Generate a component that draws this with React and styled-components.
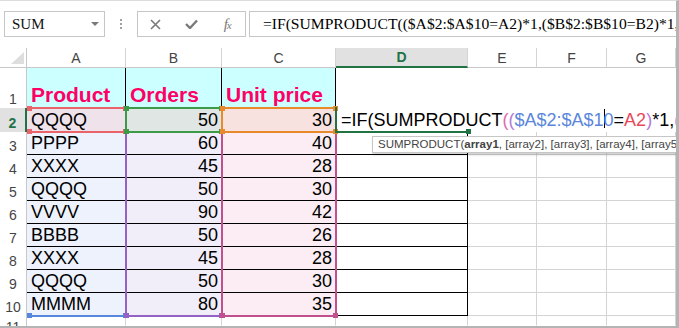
import styled, { createGlobalStyle, css } from "styled-components";

const GlobalStyle = createGlobalStyle`
  html, body {
    margin: 0;
    padding: 0;
    background: #fff;
  }
  body {
    font-family: "Liberation Sans", Arial, sans-serif;
  }
`;

const GREEN = "#217346";
const GRID = "#d4d4d4";
const HEAD_LINE = "#c8c8c8";

const Frame = styled.div`
  width: 679px;
  height: 328px;
  box-sizing: border-box;
  border-top: 1px solid #dcdcdc;
  border-right: 3px solid #b4b4b4;
  border-bottom: 2px solid #b4b4b4;
  overflow: hidden;
  background: #fff;
`;

const FormulaBar = styled.div`
  display: flex;
  align-items: flex-start;
  height: 47px;
  box-sizing: border-box;
  padding: 10px 0 0 4px;
`;

const NameBox = styled.div`
  width: 101px;
  height: 26px;
  box-sizing: border-box;
  border: 1px solid #c6c6c6;
  display: flex;
  align-items: center;
  justify-content: space-between;
  padding: 0 5px 0 7px;
  font-family: "Liberation Serif", "Times New Roman", serif;
  font-size: 15px;
  color: #111;
`;

const DropArrow = styled.span`
  width: 0;
  height: 0;
  border-left: 4px solid transparent;
  border-right: 4px solid transparent;
  border-top: 4px solid #7a7a7a;
`;

const Grip = styled.div`
  display: flex;
  flex-direction: column;
  gap: 2px;
  margin: 8px 15px 0 15px;
`;

const GripDot = styled.span`
  width: 2px;
  height: 2px;
  background: #a0a0a0;
`;

const FxBox = styled.div`
  width: 109px;
  height: 26px;
  box-sizing: border-box;
  border: 1px solid #c6c6c6;
  display: grid;
  grid-template-columns: repeat(3, 1fr);
  align-items: center;
  justify-items: center;
  color: #7a7a7a;
`;

const FxLabel = styled.span`
  font-family: "Liberation Serif", "Times New Roman", serif;
  font-style: italic;
  font-size: 15px;
  color: #7a7a7a;
  letter-spacing: -1px;
  & small {
    font-size: 11px;
  }
`;

const FormulaInput = styled.div`
  flex: 1;
  margin-left: 3px;
  height: 26px;
  box-sizing: border-box;
  border: 1px solid #c6c6c6;
  border-right: none;
  padding-left: 13px;
  font-family: "Liberation Serif", "Times New Roman", serif;
  font-size: 15.6px;
  line-height: 24px;
  white-space: nowrap;
  overflow: hidden;
  color: #000;
`;

const gridTemplate = css`
  display: grid;
  grid-template-columns: 27px 99px 96px 114px 132px 69px 70px 69px;
  grid-template-rows: 20px 40px 24px repeat(8, 23px) 10px;
`;

const Sheet = styled.div`
  position: relative;
`;

const Grid = styled.div`
  ${gridTemplate}
`;

const Overlay = styled.div`
  ${gridTemplate}
  position: absolute;
  inset: 0;
  pointer-events: none;
  z-index: 3;
`;

const Corner = styled.div`
  box-sizing: border-box;
  border-right: 1px solid ${HEAD_LINE};
  border-bottom: 1px solid ${HEAD_LINE};
  display: flex;
  justify-content: flex-end;
  align-items: flex-end;
  padding: 0 2px 3px 0;
`;

const ColHead = styled.div`
  box-sizing: border-box;
  border-right: 1px solid ${GRID};
  border-bottom: ${(p) => (p.$active ? `2px solid ${GREEN}` : `1px solid ${HEAD_LINE}`)};
  background: ${(p) => (p.$active ? "#e1e1e1" : "#fff")};
  color: ${(p) => (p.$active ? GREEN : "#444")};
  font-weight: ${(p) => (p.$active ? "bold" : "normal")};
  font-size: 14px;
  display: flex;
  align-items: center;
  justify-content: center;
`;

const RowHead = styled.div`
  box-sizing: border-box;
  overflow: hidden;
  border-right: ${(p) => (p.$active ? `2px solid ${GREEN}` : `1px solid ${HEAD_LINE}`)};
  background: ${(p) => (p.$active ? "#e1e1e1" : "#fff")};
  color: ${(p) => (p.$active ? GREEN : "#444")};
  font-weight: ${(p) => (p.$active ? "bold" : "normal")};
  font-size: 14px;
  display: flex;
  align-items: ${(p) => (p.$cut ? "flex-start" : "flex-end")};
  justify-content: center;
  padding: ${(p) => (p.$cut ? "3px 0 0" : "0 0 1px")};
`;

const Cell = styled.div`
  box-sizing: border-box;
  min-width: 0;
  display: flex;
  align-items: flex-end;
  justify-content: ${(p) => (p.$num ? "flex-end" : "flex-start")};
  padding: 0 3px 0 4px;
  border-right: 1px solid ${(p) => p.$right || "transparent"};
  border-bottom: 1px solid ${(p) => p.$bottom || "transparent"};
  background: ${(p) => p.$fill || "#fff"};
  font-size: 18px;
  color: #000;
  white-space: nowrap;
`;

const TitleCell = styled(Cell)`
  font-size: 21px;
  font-weight: bold;
  color: #ff0066;
`;

const EditCell = styled(Cell)`
  position: relative;
  z-index: 2;
  padding-left: 5px;
  overflow: visible;
`;

const EditText = styled.div`
  align-self: stretch;
  display: flex;
  align-items: flex-end;
  background: #fff;
  padding-right: 40px;
  font-size: 18px;
`;

const Tok = styled.span`
  color: ${(p) => p.$c};
`;

const Caret = styled.span`
  display: inline-block;
  width: 1px;
  height: 19px;
  margin: 0 -1px 3px 0;
  background: #000;
  align-self: flex-end;
`;

const RangeBox = styled.div`
  grid-area: ${(p) => p.$area};
  margin: ${(p) => (p.$noLeft ? "-1px -1px -1px 0" : "-1px")};
  border: 2px solid ${(p) => p.$color};
  ${(p) => p.$noLeft && "border-left: none;"}
  position: relative;
`;

const Handle = styled.span`
  position: absolute;
  width: 5px;
  height: 5px;
  background: ${(p) => p.$color};
  ${(p) => (p.$v === "top" ? "top: -3px;" : "bottom: -3px;")}
  ${(p) => (p.$h === "left" ? `left: ${p.$edge ? "0" : "-3px"};` : "right: -3px;")}
`;

const ActiveBox = styled.div`
  grid-area: 3 / 5 / 4 / 6;
  margin: -1px;
  border-left: 2px solid ${GREEN};
  border-bottom: 2px solid ${GREEN};
  position: relative;
`;

const FillHandle = styled.span`
  position: absolute;
  right: -2px;
  bottom: -3px;
  width: 5px;
  height: 5px;
  background: ${GREEN};
`;

const Tooltip = styled.div`
  position: absolute;
  top: calc(100% + 5px);
  left: 35px;
  height: 17px;
  box-sizing: border-box;
  padding: 0 5px;
  background: #fff;
  border: 1px solid #c6c6c6;
  box-shadow: 1px 2px 2px rgba(0, 0, 0, 0.18);
  font-size: 11.5px;
  line-height: 15px;
  color: #444;
  white-space: nowrap;
`;

const COLS = ["A", "B", "C", "D", "E", "F", "G"];

const DATA = [
  ["QQQQ", 50, 30],
  ["PPPP", 60, 40],
  ["XXXX", 45, 28],
  ["QQQQ", 50, 30],
  ["VVVV", 90, 42],
  ["BBBB", 50, 26],
  ["XXXX", 45, 28],
  ["QQQQ", 50, 30],
  ["MMMM", 80, 35],
];

const COL_FILL = ["#eef2fc", "#f1edf9", "#fbedf3"];
const ROW2_FILL = ["#efe2eb", "#dfe6e3", "#f7e2e0"];

const RANGES = [
  { area: "3 / 2 / 12 / 3", color: "#5687dd", noLeft: true },
  { area: "3 / 3 / 12 / 4", color: "#9461c4" },
  { area: "3 / 4 / 12 / 5", color: "#c2508c" },
  { area: "3 / 2 / 4 / 3", color: "#e8646a", noLeft: true },
  { area: "3 / 3 / 4 / 4", color: "#3d9a47" },
  { area: "3 / 4 / 4 / 5", color: "#e8892c" },
];

function CornerTriangle() {
  return (
    <svg width="13" height="12" viewBox="0 0 13 12">
      <polygon points="13,0 13,12 0,12" fill="#dedede" />
    </svg>
  );
}

function CrossIcon() {
  return (
    <svg width="11" height="11" viewBox="0 0 11 11">
      <path d="M1 1 L10 10 M10 1 L1 10" stroke="#7a7a7a" strokeWidth="1.6" fill="none" />
    </svg>
  );
}

function CheckIcon() {
  return (
    <svg width="13" height="10" viewBox="0 0 13 10">
      <path d="M1 5 L5 9 L12 1.5" stroke="#7a7a7a" strokeWidth="2.4" fill="none" />
    </svg>
  );
}

function DataRow({ r, row }) {
  const cells = row.map((v, i) => (
    <Cell
      key={i}
      $num={i > 0}
      $right="#000"
      $bottom="#000"
      $fill={r === 2 ? ROW2_FILL[i] : COL_FILL[i]}
    >
      {v}
    </Cell>
  ));
  if (r === 2) {
    cells.push(
      <EditCell key="d">
        <EditText>
          =IF(SUMPRODUCT
          <Tok $c="#e36aae">(</Tok>
          <Tok $c="#b67ad8">(</Tok>
          <Tok $c="#5b86dc">$A$2:$A$1</Tok>
          <Caret />
          <Tok $c="#5b86dc">0</Tok>=<Tok $c="#e8485a">A2</Tok>
          <Tok $c="#b67ad8">)</Tok>*1,<Tok $c="#b67ad8">(</Tok>
        </EditText>
      </EditCell>
    );
    cells.push(<Cell key="e" />, <Cell key="f" />, <Cell key="g" />);
  } else {
    cells.push(<Cell key="d" $right="#000" $bottom="#000" />);
    cells.push(
      <Cell key="e" $right={GRID} $bottom={GRID} />,
      <Cell key="f" $right={GRID} $bottom={GRID} />,
      <Cell key="g" $right={GRID} $bottom={GRID} />
    );
  }
  return (
    <>
      <RowHead $active={r === 2}>{r}</RowHead>
      {cells}
    </>
  );
}

export default function App() {
  return (
    <Frame>
      <GlobalStyle />
      <FormulaBar>
        <NameBox>
          SUM
          <DropArrow />
        </NameBox>
        <Grip>
          <GripDot />
          <GripDot />
          <GripDot />
        </Grip>
        <FxBox>
          <CrossIcon />
          <CheckIcon />
          <FxLabel>
            f<small>x</small>
          </FxLabel>
        </FxBox>
        <FormulaInput>
          =IF(SUMPRODUCT(($A$2:$A$10=A2)*1,($B$2:$B$10=B2)*1,($C$2:$C$10=C2)*1)&gt;1,"Duplicate","")
        </FormulaInput>
      </FormulaBar>

      <Sheet>
        <Grid>
          <Corner>
            <CornerTriangle />
          </Corner>
          {COLS.map((c) => (
            <ColHead key={c} $active={c === "D"}>
              {c}
            </ColHead>
          ))}

          <RowHead>1</RowHead>
          <TitleCell $right="#000" $bottom="#000" $fill="#ccffff">Product</TitleCell>
          <TitleCell $right="#000" $bottom="#000" $fill="#ccffff">Orders</TitleCell>
          <TitleCell $right="#000" $bottom="#000" $fill="#ccffff">Unit price</TitleCell>
          <Cell />
          <Cell />
          <Cell />
          <Cell />

          {DATA.map((row, i) => (
            <DataRow key={i} r={i + 2} row={row} />
          ))}

          <RowHead $cut>11</RowHead>
          {COLS.map((c) => (
            <Cell key={c} $right={GRID} />
          ))}
        </Grid>

        <Overlay>
          {RANGES.map((rg) => (
            <RangeBox key={rg.area + rg.color} $area={rg.area} $color={rg.color} $noLeft={rg.noLeft}>
              <Handle $color={rg.color} $v="top" $h="left" $edge={rg.noLeft} />
              <Handle $color={rg.color} $v="top" $h="right" />
              <Handle $color={rg.color} $v="bottom" $h="left" $edge={rg.noLeft} />
              <Handle $color={rg.color} $v="bottom" $h="right" />
            </RangeBox>
          ))}
          <ActiveBox>
            <FillHandle />
            <Tooltip>
              SUMPRODUCT(<b>array1</b>, [array2], [array3], [array4], [array5])
            </Tooltip>
          </ActiveBox>
        </Overlay>
      </Sheet>
    </Frame>
  );
}
